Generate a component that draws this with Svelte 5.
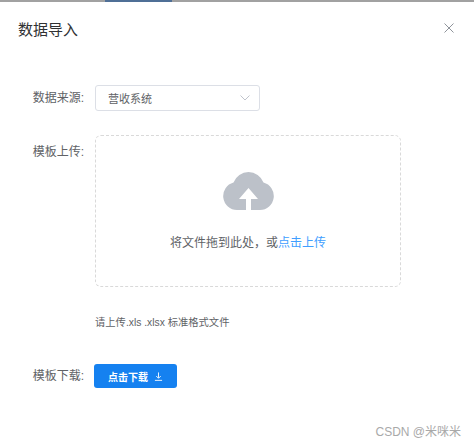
<script>
	let source = '营收系统';
</script>

<div class="page">
	<div class="topbar"><span class="tab"></span></div>
	<div class="dialog">
		<header>
			<h2>数据导入</h2>
			<svg class="close" viewBox="0 0 10 10" width="10" height="10"><path d="M.5.5l9 9M9.5.5l-9 9" stroke="#8f949b" fill="none" /></svg>
		</header>

		<div class="row source">
			<span class="label">数据来源:</span>
			<div class="select">
				<span>{source}</span>
				<svg viewBox="0 0 10 6" width="10" height="6"><path d="M.5.5l4.500 4.500 4.500-4.500" stroke="#c0c4cc" fill="none" /></svg>
			</div>
		</div>

		<div class="row upload">
			<span class="label">模板上传:</span>
			<div class="drop">
				<svg class="cloud" viewBox="0 0 51 38" width="51" height="38">
					<path fill="#bcc1c9" d="M23 38H14A14 14 0 0 1 10.500 10.500A16 16 0 0 1 40.500 10.500A14 14 0 0 1 37 38H28V27h7L25.500 16 16 27h7z" />
				</svg>
				<p>将文件拖到此处，或<em>点击上传</em></p>
			</div>
		</div>

		<p class="hint">请上传.xls .xlsx 标准格式文件</p>

		<div class="row download">
			<span class="label">模板下载:</span>
			<button type="button">
				点击下载
				<svg viewBox="0 0 10 10" width="9" height="9"><path d="M5 .5v6M2.500 4.500L5 7l2.500-2.500M1 9.300h8" stroke="#fff" fill="none" /></svg>
			</button>
		</div>
	</div>
	<span class="mark">CSDN @米咪米</span>
</div>

<style>
	:global(body) {
		margin: 0;
		background: #fff;
	}

	.page {
		position: relative;
		width: 474px;
		height: 445px;
		overflow: hidden;
		font-family: "Liberation Sans", "Noto Sans CJK SC", sans-serif;
		color: #606266;
	}

	.topbar {
		height: 2px;
		background: #a1a1a1;
	}

	.tab {
		display: block;
		width: 67px;
		height: 2px;
		margin-left: 105px;
		background: #4f6f96;
	}

	.dialog {
		padding: 0 0 0 18px;
	}

	header {
		display: flex;
		justify-content: space-between;
		align-items: center;
		height: 26px;
		margin-top: 13px;
		padding-right: 20px;
	}

	h2 {
		margin: 0;
		font-size: 15px;
		font-weight: 400;
		color: #303133;
	}

	.row {
		display: flex;
		align-items: flex-start;
	}

	.label {
		width: 66px;
		margin-right: 11px;
		text-align: right;
		font-size: 12px;
		line-height: 26px;
	}

	.source {
		margin-top: 44px;
	}

	.select {
		box-sizing: border-box;
		display: flex;
		justify-content: space-between;
		align-items: center;
		width: 165px;
		height: 26px;
		padding: 0 9px 0 12px;
		border: 1px solid #dcdfe6;
		border-radius: 3px;
		font-size: 11px;
	}

	.upload {
		margin-top: 24px;
	}

	.upload .label {
		line-height: 34px;
	}

	.drop {
		box-sizing: border-box;
		display: flex;
		flex-direction: column;
		align-items: center;
		width: 306px;
		height: 152px;
		padding-top: 36px;
		border: 1px dashed #d9d9d9;
		border-radius: 6px;
	}

	.cloud {
		display: block;
	}

	.drop p {
		margin: 25px 0 0;
		font-size: 12px;
		line-height: 16px;
	}

	.drop em {
		font-style: normal;
		color: #409eff;
	}

	.hint {
		margin: 28px 0 0 77px;
		font-size: 10.300px;
		line-height: 16px;
	}

	.download {
		margin-top: 33px;
	}

	.download .label {
		line-height: 25px;
	}

	button {
		display: flex;
		align-items: center;
		justify-content: center;
		gap: 6px;
		width: 83px;
		height: 24px;
		margin-left: -1px;
		padding: 0;
		border: 0;
		border-radius: 3px;
		background: #1581f0;
		color: #fff;
		font-family: inherit;
		font-size: 10px;
		font-weight: 700;
	}

	.mark {
		position: absolute;
		right: 13px;
		bottom: 6px;
		font-size: 12px;
		color: #a9a9a9;
	}
</style>
